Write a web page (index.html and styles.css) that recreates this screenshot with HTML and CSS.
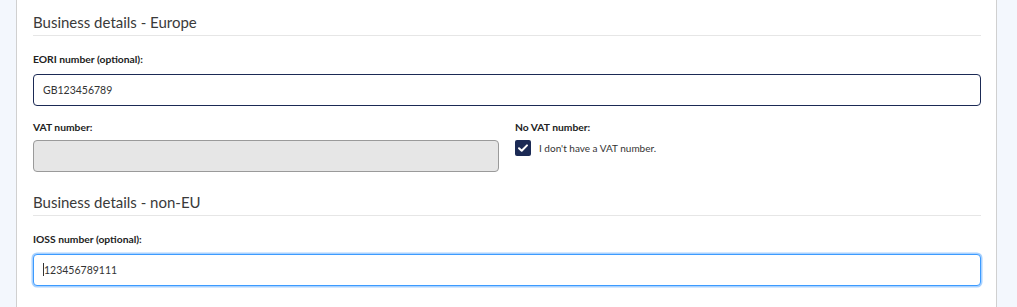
FILE: index.html
```html
<!DOCTYPE html>
<html>
<head>
<meta charset="utf-8">
<link rel="stylesheet" href="styles.css">
</head>
<body>
<div class="panel">
  <section class="section">
    <h2 class="section-title">Business details - Europe</h2>
    <div class="field">
      <label class="label">EORI number (optional):</label>
      <div class="input input-dark">GB123456789</div>
    </div>
    <div class="row">
      <div class="field col">
        <label class="label">VAT number:</label>
        <div class="input input-disabled"></div>
      </div>
      <div class="field col">
        <label class="label">No VAT number:</label>
        <div class="check">
          <span class="box"><svg viewBox="0 0 16 16" width="16" height="16"><path d="M4 8.2l2.7 2.6L12 5.4" fill="none" stroke="#fff" stroke-width="2" stroke-linecap="round" stroke-linejoin="round"/></svg></span>
          <span class="check-text">I don't have a VAT number.</span>
        </div>
      </div>
    </div>
  </section>
  <section class="section second">
    <h2 class="section-title">Business details - non-EU</h2>
    <div class="field">
      <label class="label">IOSS number (optional):</label>
      <div class="input input-focus"><span class="caret"></span>123456789111</div>
    </div>
  </section>
</div>
</body>
</html>
```
FILE: styles.css
```css
html, body {
  margin: 0;
  padding: 0;
  background: #f3f7fd;
  font-family: "Lato", "Noto Sans", sans-serif;
  color: #333;
}
.panel {
  margin-left: 16px;
  width: 948px;
  min-height: 307px;
  background: #fff;
  border-left: 1px solid #d0d0d0;
  border-right: 1px solid #d0d0d0;
  padding: 0 15px 0 16px;
}
.section { padding-top: 12px; }
.section.second { padding-top: 20px; }
.section-title {
  margin: 0;
  font-size: 15px;
  font-weight: 400;
  line-height: 20px;
  color: #3a3a3a;
  padding-bottom: 3px;
  border-bottom: 1px solid #e6e6e6;
}
.field { margin-top: 16px; }
.label {
  display: block;
  font-size: 10.3px;
  font-weight: 700;
  line-height: 14px;
  color: #222;
  margin-bottom: 8px;
}
.input {
  box-sizing: border-box;
  height: 32px;
  border-radius: 4px;
  padding: 0 9px;
  font-size: 10.5px;
  line-height: 30px;
  color: #333;
  background: #fff;
}
.input-dark { border: 1px solid #1b2a55; }
.input-disabled { border: 1px solid #9a9a9a; background: #e6e6e6; }
.input-focus {
  border: 1px solid #3d9bff;
  box-shadow: 0 0 0 1.5px #a9d2ff;
}
.caret {
  display: inline-block;
  width: 1px;
  height: 13px;
  background: #333;
  vertical-align: -2px;
}
.row {
  display: grid;
  grid-template-columns: 466px 1fr;
  column-gap: 16px;
}
.row .field { margin-top: 14px; }
.row .label { margin-bottom: 6px; }
.check { display: flex; align-items: center; gap: 8px; height: 16px; }
.box {
  width: 16px;
  height: 16px;
  background: #1b2a55;
  border-radius: 2px;
  display: flex;
}
.check-text { font-size: 10px; color: #333; }
```
